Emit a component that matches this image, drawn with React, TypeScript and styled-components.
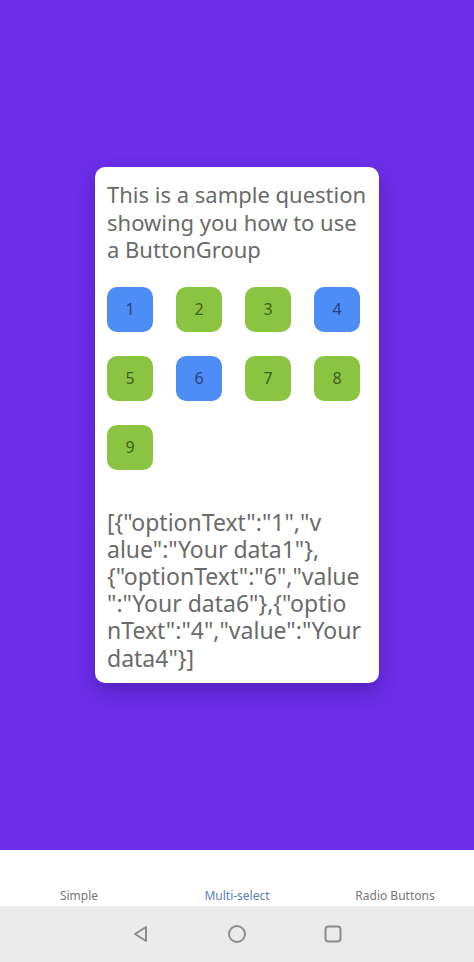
import React from "react";
import styled, { createGlobalStyle } from "styled-components";

const Global = createGlobalStyle`
  html, body { margin: 0; padding: 0; }
  body { font-family: "Noto Sans", Roboto, sans-serif; }
  #root { height: 962px; }
`;

const Screen = styled.div`
  display: flex;
  flex-direction: column;
  width: 474px;
  height: 962px;
  overflow: hidden;
`;

const Stage = styled.main`
  flex: 1;
  background: #6c2ee9;
  display: flex;
  align-items: center;
  justify-content: center;
`;

const Card = styled.section`
  width: 284px;
  box-sizing: border-box;
  padding: 14px 12px 11px 12px;
  background: #ffffff;
  border-radius: 10px;
  box-shadow: 0 8px 18px rgba(40, 10, 110, 0.35);
  color: #6b6b6b;
`;

const Question = styled.h1`
  margin: 0;
  font-size: 22px;
  line-height: 27.5px;
  font-weight: 400;
  color: #6a6a6a;
`;

const Options = styled.div`
  display: grid;
  grid-template-columns: repeat(4, 46px);
  column-gap: 23px;
  row-gap: 24px;
  margin-top: 23px;
`;

const Option = styled.button<{ $selected: boolean }>`
  width: 46px;
  height: 45px;
  border: none;
  border-radius: 10px;
  padding: 0;
  font-family: inherit;
  font-size: 16px;
  background: ${(p) => (p.$selected ? "#4f8df6" : "#8bc440")};
  color: ${(p) => (p.$selected ? "#27418a" : "#3f5f1c")};
  display: flex;
  align-items: center;
  justify-content: center;
`;

const Output = styled.p`
  margin: 39px 0 0 0;
  font-size: 23px;
  line-height: 27.2px;
  color: #6a6a6a;
  white-space: pre-line;
`;

const TabBar = styled.nav`
  height: 56px;
  background: #ffffff;
  display: grid;
  grid-template-columns: repeat(3, 1fr);
  align-items: end;
`;

const Tab = styled.span<{ $active?: boolean }>`
  text-align: center;
  font-size: 12px;
  line-height: 16px;
  padding-bottom: 2px;
  color: ${(p) => (p.$active ? "#5d80b8" : "#777777")};
`;

const SystemNav = styled.div`
  height: 56px;
  background: #ebebeb;
  display: flex;
  align-items: center;
  justify-content: center;
  gap: 76px;
`;

const NavIcon = styled.svg`
  width: 20px;
  height: 20px;
  stroke: #8c8c8c;
  stroke-width: 2;
  fill: none;
`;

const selected = new Set([1, 4, 6]);
const data = [
  { optionText: "1", value: "Your data1" },
  { optionText: "6", value: "Your data6" },
  { optionText: "4", value: "Your data4" },
];

// The serialized selection is shown wrapped the way the native text view
// lays it out; these are the character counts of each wrapped line.
const wrapWidths = [21, 20, 24, 23, 25];

function wrapText(text: string): string {
  const lines: string[] = [];
  let pos = 0;
  for (const w of wrapWidths) {
    lines.push(text.slice(pos, pos + w).trimEnd());
    pos += w;
  }
  lines.push(text.slice(pos));
  return lines.join("\n");
}

export default function App() {
  return (
    <Screen>
      <Global />
      <Stage>
        <Card>
          <Question>This is a sample question showing you how to use a ButtonGroup</Question>
          <Options>
            {[1, 2, 3, 4, 5, 6, 7, 8, 9].map((n) => (
              <Option key={n} $selected={selected.has(n)}>
                {n}
              </Option>
            ))}
          </Options>
          <Output>{wrapText(JSON.stringify(data))}</Output>
        </Card>
      </Stage>
      <TabBar>
        <Tab>Simple</Tab>
        <Tab $active>Multi-select</Tab>
        <Tab>Radio Buttons</Tab>
      </TabBar>
      <SystemNav>
        <NavIcon viewBox="0 0 20 20">
          <path d="M15 3 L4 10 L15 17 Z" strokeLinejoin="round" />
        </NavIcon>
        <NavIcon viewBox="0 0 20 20">
          <circle cx="10" cy="10" r="8" />
        </NavIcon>
        <NavIcon viewBox="0 0 20 20">
          <rect x="2.5" y="2.5" width="15" height="15" rx="3" />
        </NavIcon>
      </SystemNav>
    </Screen>
  );
}
